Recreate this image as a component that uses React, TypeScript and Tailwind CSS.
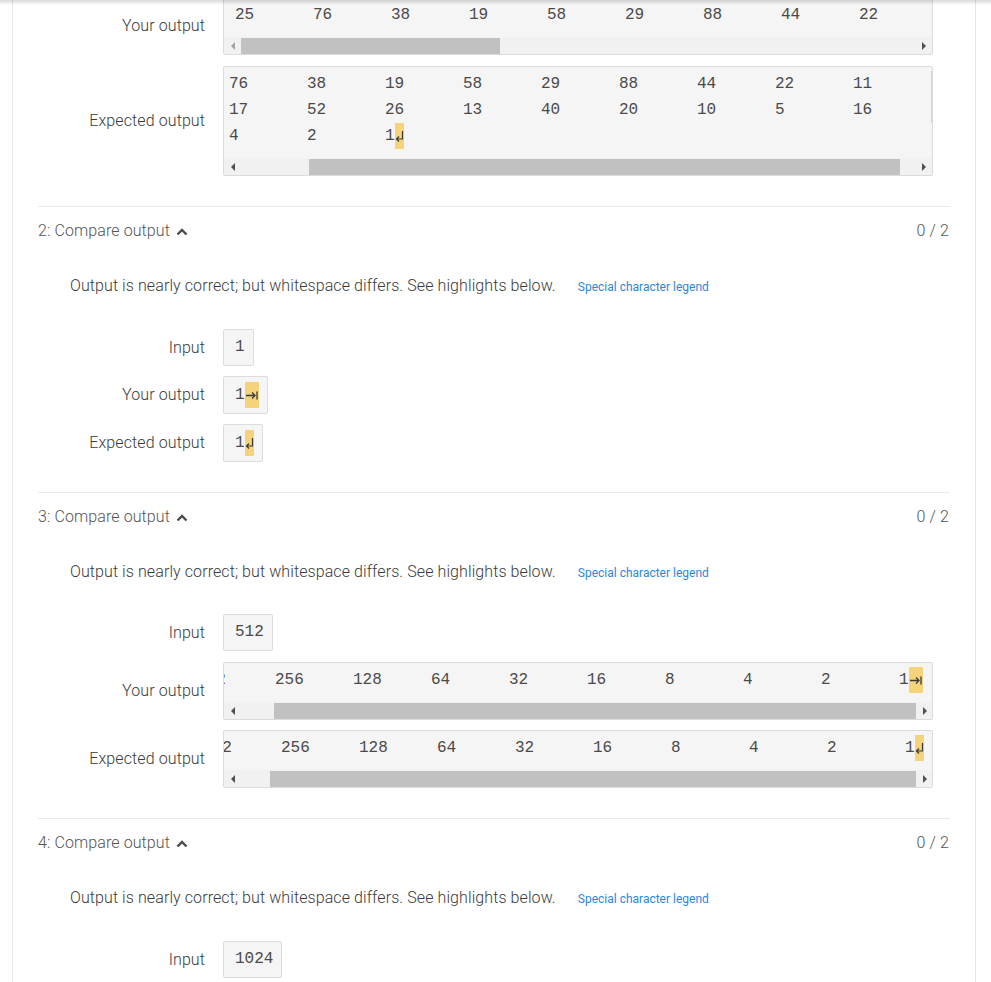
import type { ReactNode } from "react";

const MONO = "font-['Liberation_Mono','DejaVu_Sans_Mono',monospace]";

function Tab() {
  return (
    <span className="inline-block h-[26px] w-[14px] bg-[#f4d37b] align-top">
      <svg width="14" height="26" viewBox="0 0 14 26">
        <path d="M1 13.5h9M7 10.5l3 3-3 3M12 9.5v8" fill="none" stroke="#3a3a3a" strokeWidth="1.3" />
      </svg>
    </span>
  );
}

function Nl() {
  return (
    <span className="inline-block h-[26px] w-[9.6px] bg-[#f4d37b] align-top">
      <svg width="10" height="26" viewBox="0 0 10 26">
        <path d="M7.5 8v8H1.5M4 13.5l-2.5 2.5 2.5 2.5" fill="none" stroke="#3a3a3a" strokeWidth="1.2" />
      </svg>
    </span>
  );
}

function Chevron() {
  return (
    <svg width="12" height="9" viewBox="0 0 12 9" className="ml-[6px]">
      <polyline points="1.5,7.5 6,3 10.5,7.5" fill="none" stroke="#4a4a4a" strokeWidth="2.4" />
    </svg>
  );
}

function Row({ label, className = "", children }: { label: string; className?: string; children: ReactNode }) {
  return (
    <div className={`flex items-center ${className}`}>
      <div className="w-[167px] shrink-0 text-right text-[16px] leading-[24px] font-light tracking-[0.1px] text-[#3a3a3a]">
        {label}
      </div>
      <div className="ml-[18px] min-w-0">{children}</div>
    </div>
  );
}

function SmallBox({ tall, children }: { tall?: boolean; children: ReactNode }) {
  return (
    <div
      className={`inline-flex items-start rounded-[2px] border border-[#dcdcdc] bg-[#f5f5f5] pt-[4px] pr-[8px] pl-[11px] text-[16px] leading-[26px] whitespace-pre text-[#4a4a4a] ${tall ? "h-[38px] pt-[5px]" : "h-[37px]"} ${MONO}`}
    >
      {children}
    </div>
  );
}

function Scrollbar({ thumb, leftOn }: { thumb: string; leftOn: boolean }) {
  return (
    <div className="flex h-[17px] bg-[#f1f1f1]">
      <div className="flex w-[17px] shrink-0 items-center justify-center">
        <div
          className={`h-0 w-0 border-y-[4px] border-r-[4px] border-y-transparent ${leftOn ? "border-r-[#505050]" : "border-r-[#a3a3a3]"}`}
        />
      </div>
      <div className="flex flex-1 items-center">
        <div className={`h-[16px] bg-[#c1c1c1] ${thumb}`} />
      </div>
      <div className="flex w-[17px] shrink-0 items-center justify-center">
        <div className="h-0 w-0 border-y-[4px] border-l-[4px] border-y-transparent border-l-[#505050]" />
      </div>
    </div>
  );
}

function ScrollBox({
  shift,
  thumb,
  leftOn,
  children,
}: {
  shift: string;
  thumb: string;
  leftOn: boolean;
  children: ReactNode;
}) {
  return (
    <div className="w-[710px] rounded-[2px] border border-[#dcdcdc] bg-[#f5f5f5]">
      <div className="overflow-hidden pt-[4px] pb-[9px]">
        <div
          className={`pl-[11px] text-[16px] leading-[26px] whitespace-pre text-[#4a4a4a] [tab-size:78px] ${MONO} ${shift}`}
        >
          {children}
        </div>
      </div>
      <Scrollbar thumb={thumb} leftOn={leftOn} />
    </div>
  );
}

function Header({ n }: { n: number }) {
  return (
    <div className="flex items-center justify-between text-[16px] leading-[24px] font-light tracking-[0.1px] text-[#555]">
      <div className="flex items-center">
        {n}: Compare output
        <Chevron />
      </div>
      <div className="pr-[1px]">0 / 2</div>
    </div>
  );
}

function Message() {
  return (
    <div className="mt-[31px] flex items-baseline pl-[32px] leading-[24px]">
      <span className="text-[16px] font-light tracking-[0.09px] text-[#3a3a3a]">
        Output is nearly correct; but whitespace differs. See highlights below.
      </span>
      <a className="ml-[22px] text-[12px] text-[#2b87da]">Special character legend</a>
    </div>
  );
}

export default function App() {
  return (
    <div className="relative h-[982px] overflow-hidden bg-white font-['Roboto','Liberation_Sans',sans-serif]">
      <div className="pointer-events-none absolute inset-x-0 top-0 z-10 h-[5px] bg-gradient-to-b from-black/15 to-transparent" />
      <div className="ml-[12px] flex h-[1100px] w-[964px] flex-col border-x border-[#e6e6e6] px-[25px]">
        <div className="-mt-[3px] flex flex-col gap-[11px] pb-[30px]">
          <Row label="Your output">
            <ScrollBox shift="ml-0" thumb="ml-0 w-[259px]" leftOn={false}>
              {"25\t76\t38\t19\t58\t29\t88\t44\t22\t11\t34\t17"}
            </ScrollBox>
          </Row>
          <Row label="Expected output">
            <ScrollBox shift="-ml-[6px]" thumb="ml-[68px] w-[591px]" leftOn={true}>
              <div>
                {"76\t38\t19\t58\t29\t88\t44\t22\t11\t"}
                <Nl />
              </div>
              <div>
                {"17\t52\t26\t13\t40\t20\t10\t5\t16\t"}
                <Nl />
              </div>
              <div>
                {"4\t2\t1"}
                <Nl />
              </div>
            </ScrollBox>
          </Row>
        </div>

        <div className="border-t border-[#e9e9e9] pt-[12px] pb-[30px]">
          <Header n={2} />
          <Message />
          <div className="mt-[30px] flex flex-col gap-[10px]">
            <Row label="Input">
              <SmallBox>1</SmallBox>
            </Row>
            <Row label="Your output">
              <SmallBox tall>
                1<Tab />
              </SmallBox>
            </Row>
            <Row label="Expected output">
              <SmallBox tall>
                1<Nl />
              </SmallBox>
            </Row>
          </div>
        </div>

        <div className="border-t border-[#e9e9e9] pt-[12px] pb-[30px]">
          <Header n={3} />
          <Message />
          <div className="mt-[29px] flex flex-col gap-[10px]">
            <Row label="Input">
              <SmallBox>512</SmallBox>
            </Row>
            <Row label="Your output" className="mt-[1px]">
              <ScrollBox shift="-ml-[38px]" thumb="ml-[33px] w-[642px]" leftOn={true}>
                {"512\t256\t128\t64\t32\t16\t8\t4\t2\t1"}
                <Tab />
              </ScrollBox>
            </Row>
            <Row label="Expected output">
              <ScrollBox shift="-ml-[32px]" thumb="ml-[29px] w-[646px]" leftOn={true}>
                {"512\t256\t128\t64\t32\t16\t8\t4\t2\t1"}
                <Nl />
              </ScrollBox>
            </Row>
          </div>
        </div>

        <div className="border-t border-[#e9e9e9] pt-[12px] pb-[30px]">
          <Header n={4} />
          <Message />
          <div className="mt-[30px] flex flex-col gap-[10px]">
            <Row label="Input">
              <SmallBox>1024</SmallBox>
            </Row>
            <Row label="Your output">
              <ScrollBox shift="-ml-[38px]" thumb="ml-[33px] w-[642px]" leftOn={true}>
                {"1024\t512\t256\t128\t64\t32\t16\t8\t4\t2\t1"}
                <Tab />
              </ScrollBox>
            </Row>
          </div>
        </div>
      </div>
    </div>
  );
}
